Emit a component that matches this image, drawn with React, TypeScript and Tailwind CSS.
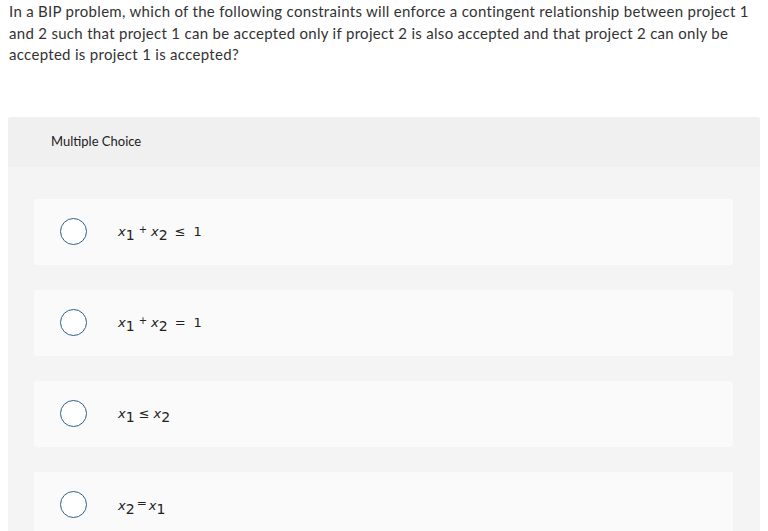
import React from 'react';

type Choice = { id: string; expr: React.ReactNode };

const X = ({ n }: { n: string }) => (
  <span>
    <i>x</i>
    <span className="inline-block text-[14px] align-[-4px] leading-none">{n}</span>
  </span>
);

const Plus = () => <span className="inline-block text-[10px] align-[3px] mx-[4px]">+</span>;

const choices: Choice[] = [
  {
    id: 'a',
    expr: (
      <>
        <X n="1" />
        <Plus />
        <X n="2" />
        <span className="ml-[7px]">≤</span>
        <span className="ml-[8px]">1</span>
      </>
    ),
  },
  {
    id: 'b',
    expr: (
      <>
        <X n="1" />
        <Plus />
        <X n="2" />
        <span className="ml-[7px]">=</span>
        <span className="ml-[8px]">1</span>
      </>
    ),
  },
  {
    id: 'c',
    expr: (
      <>
        <X n="1" />
        <span className="mx-[4px]">≤</span>
        <X n="2" />
      </>
    ),
  },
  {
    id: 'd',
    expr: (
      <>
        <X n="2" />
        <span className="inline-block text-[12px] align-[3px] mx-[2px]">=</span>
        <X n="1" />
      </>
    ),
  },
];

export default function App() {
  return (
    <div className="w-[768px] h-[531px] overflow-hidden bg-white font-['Lato',sans-serif] text-[#333]">
      <p className="pl-[9px] pt-[1px] text-[15px] leading-[21.5px] tracking-[0.3px] whitespace-nowrap">
        In a BIP problem, which of the following constraints will enforce a contingent relationship between project 1
        <br />
        and 2 such that project 1 can be accepted only if project 2 is also accepted and that project 2 can only be
        <br />
        accepted is project 1 is accepted?
      </p>

      <div className="mt-[51px] ml-[8px] mr-[8px] rounded-t-[3px] bg-[#f4f4f4]">
        <div className="h-[50px] flex items-center pl-[43px] bg-[#f0f0f0] rounded-t-[3px] text-[13px] text-[#222]">
          Multiple Choice
        </div>
        <div className="pt-[32px] pl-[26px] pr-[27px] flex flex-col gap-[25px]">
          {choices.map((c) => (
            <div key={c.id} className="h-[66px] flex items-center bg-[#fafafa] rounded-[3px] pl-[26px]">
              <span className="w-[27px] h-[27px] rounded-full border-[1.5px] border-[#2f5f8f] bg-white shrink-0" />
              <span className="ml-[31px] text-[13px] text-[#222] font-['DejaVu_Sans',sans-serif] whitespace-nowrap">
                {c.expr}
              </span>
            </div>
          ))}
        </div>
      </div>
    </div>
  );
}
